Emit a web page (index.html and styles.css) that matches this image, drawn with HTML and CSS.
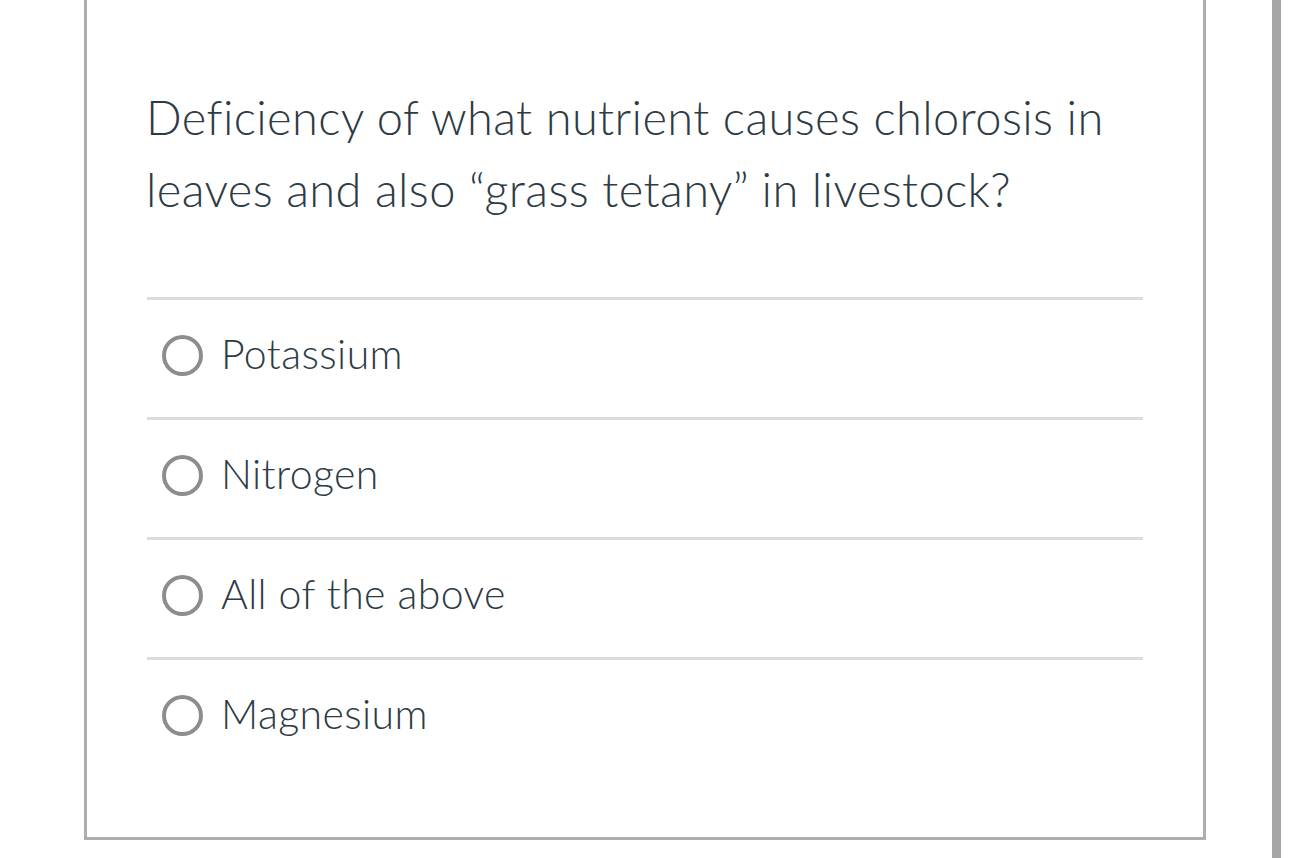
FILE: index.html
```html
<!DOCTYPE html>
<html>
<head>
<meta charset="utf-8">
<link rel="stylesheet" href="styles.css">
</head>
<body>
<div class="page">
  <div class="card">
    <div class="question">Deficiency of what nutrient causes chlorosis in leaves and also “grass tetany” in livestock?</div>
    <div class="answers">
      <div class="answer"><span class="radio"></span><span class="label">Potassium</span></div>
      <div class="answer"><span class="radio"></span><span class="label">Nitrogen</span></div>
      <div class="answer"><span class="radio"></span><span class="label">All of the above</span></div>
      <div class="answer"><span class="radio"></span><span class="label">Magnesium</span></div>
    </div>
  </div>
  <div class="scrollbar"></div>
</div>
</body>
</html>
```

FILE: styles.css
```css
html, body {
  margin: 0;
  padding: 0;
  background: #ffffff;
}
.page {
  display: flex;
  align-items: flex-start;
  height: 858px;
  overflow: hidden;
}
.card {
  margin-left: 84px;
  width: 1122px;
  box-sizing: border-box;
  border: 3px solid #adadad;
  border-top: none;
  padding: 81px 60px 60px 60px;
  font-family: Lato, "Open Sans", sans-serif;
  font-weight: 300;
  color: #2d3b45;
}
.question {
  font-size: 47px;
  line-height: 72px;
  letter-spacing: 0.38px;
  margin-left: -1px;
  margin-bottom: 72px;
}
.answer {
  display: flex;
  align-items: center;
  border-top: 3px solid #dcdcdc;
  height: 117px;
  padding-left: 15px;
}
.radio {
  width: 33px;
  height: 33px;
  border: 4px solid #8d8d8d;
  border-radius: 50%;
  flex: none;
  margin-top: -6px;
}
.label {
  margin-left: 18px;
  font-size: 41px;
  line-height: 48px;
  letter-spacing: 0.4px;
  margin-top: -10px;
}
.scrollbar {
  margin-left: 66px;
  width: 9px;
  height: 858px;
  background: #a6a6a6;
  flex: none;
}
```
